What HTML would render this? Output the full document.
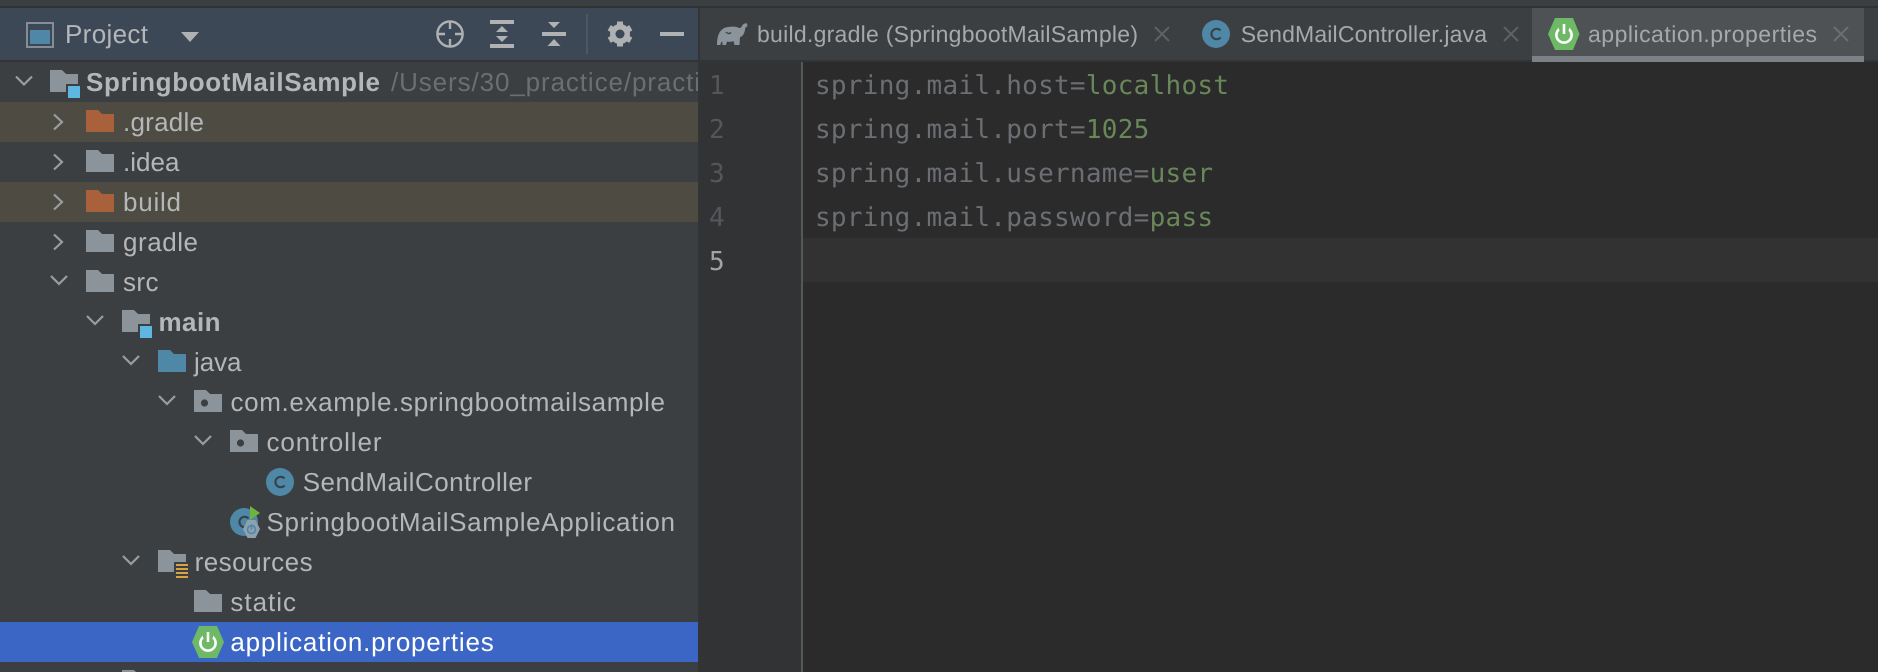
<!DOCTYPE html>
<html lang="en"><head><meta charset="utf-8"><title>application.properties</title>
<style>
html,body{margin:0;padding:0;background:#3c3f41;width:1878px;height:672px;overflow:hidden}
svg{display:block;position:absolute;left:0;top:0}
text{font-family:"Liberation Sans",sans-serif;font-size:26px;fill:#b4b6b8;text-rendering:geometricPrecision}
.b{font-weight:bold}
.m{font-family:"DejaVu Sans Mono","Liberation Mono",monospace;font-size:26px;letter-spacing:.28px;fill:#6b6e73}
.v{fill:#6a8759}
.n{font-family:"DejaVu Sans Mono","Liberation Mono",monospace;font-size:26px;fill:#54575a}
.t{fill:#a6a9ac;font-size:23px}
.ch{fill:none;stroke:#9a9da0;stroke-width:2.2}
.x{fill:none;stroke:#5d6164;stroke-width:2}
</style></head><body>
<svg width="1878" height="672" viewBox="0 0 1878 672" xmlns="http://www.w3.org/2000/svg">
<defs>
<path id="f" d="M0 0h12l4 4h12v18H0z"/>
<clipPath id="side"><rect x="0" y="62" width="698" height="40"/></clipPath>
</defs>

<!-- chrome -->
<rect width="1878" height="672" fill="#3c3f41"/>
<rect y="6" width="1878" height="2" fill="#303234"/>

<!-- project toolbar -->
<rect y="8" width="698" height="52" fill="#3d4856"/>
<rect y="60" width="1878" height="2" fill="#323436"/>
<rect x="27" y="23" width="26" height="24" fill="none" stroke="#858e96" stroke-width="2"/>
<rect x="30" y="30" width="20" height="14" fill="#4f87a6"/>
<text x="65" y="43" textLength="83">Project</text>
<path d="M181 32h18l-9 10z" fill="#afb1b3"/>
<!-- locate -->
<circle cx="450" cy="34" r="12.6" fill="none" stroke="#afb1b3" stroke-width="2.4"/>
<path d="M450 21v8M450 39v8M437 34h8M455 34h8" stroke="#afb1b3" stroke-width="2.4"/>
<!-- expand -->
<path d="M490 20h24v4h-24zM490 44h24v4h-24zM502 26l6 6h-12zM496 36h12l-6 6z" fill="#afb1b3"/>
<!-- collapse -->
<path d="M542 32h24v4h-24zM548 22h12l-6 6zM554 39l6.500 7h-13z" fill="#afb1b3"/>
<rect x="586" y="14" width="2" height="40" fill="#50585f"/>
<!-- gear -->
<g fill="#afb1b3">
<circle cx="620" cy="34" r="7.500" fill="none" stroke="#afb1b3" stroke-width="5"/>
<rect x="617" y="21.500" width="6" height="25"/>
<rect x="617" y="21.500" width="6" height="25" transform="rotate(60 620 34)"/>
<rect x="617" y="21.500" width="6" height="25" transform="rotate(120 620 34)"/>
<circle cx="620" cy="34" r="4.500" fill="#3d4856"/>
</g>
<rect x="660" y="32" width="24" height="4" fill="#afb1b3"/>

<!-- row highlights -->
<rect y="102" width="698" height="40" fill="#4d4b42"/>
<rect y="182" width="698" height="40" fill="#4d4b42"/>
<rect y="622" width="698" height="40" fill="#3b66c5"/>

<!-- root -->
<path class="ch" d="M16 76.500l8 8 8-8"/>
<use href="#f" x="50" y="70" fill="#8b939b"/>
<rect x="66" y="84" width="16" height="16" fill="#3c3f41"/>
<rect x="68" y="86" width="12" height="12" fill="#5eb6e2"/>
<text x="86" y="91" textLength="294" class="b">SpringbootMailSample</text>
<g clip-path="url(#side)"><text x="391" y="91" textLength="309" style="fill:#6c6f71">/Users/30_practice/practi</text></g>

<!-- .gradle -->
<path class="ch" d="M54 114.500l8 7.500-8 7.500"/>
<use href="#f" x="86" y="110" fill="#a8613a"/>
<text x="123" y="131" textLength="81">.gradle</text>
<!-- .idea -->
<path class="ch" d="M54 154.500l8 7.500-8 7.500"/>
<use href="#f" x="86" y="150" fill="#8b939b"/>
<text x="123" y="171" textLength="56.500">.idea</text>
<!-- build -->
<path class="ch" d="M54 194.500l8 7.500-8 7.500"/>
<use href="#f" x="86" y="190" fill="#a8613a"/>
<text x="123" y="211" textLength="58">build</text>
<!-- gradle -->
<path class="ch" d="M54 234.500l8 7.500-8 7.500"/>
<use href="#f" x="86" y="230" fill="#8b939b"/>
<text x="123" y="251" textLength="75">gradle</text>
<!-- src -->
<path class="ch" d="M51 276l8 8 8-8"/>
<use href="#f" x="86" y="270" fill="#8b939b"/>
<text x="123" y="291" textLength="35.500">src</text>
<!-- main -->
<path class="ch" d="M87 316l8 8 8-8"/>
<use href="#f" x="122" y="310" fill="#8b939b"/>
<rect x="138" y="324" width="16" height="16" fill="#3c3f41"/>
<rect x="140" y="326" width="12" height="12" fill="#5eb6e2"/>
<text x="158.500" y="331" textLength="62" class="b">main</text>
<!-- java -->
<path class="ch" d="M123 356l8 8 8-8"/>
<use href="#f" x="158" y="350" fill="#4f87a6"/>
<text x="194" y="371" textLength="47.500">java</text>
<!-- com.example -->
<path class="ch" d="M159 396l8 8 8-8"/>
<use href="#f" x="194" y="390" fill="#8b939b"/>
<circle cx="204.500" cy="403" r="3.600" fill="#3c3f41"/>
<text x="230.500" y="411" textLength="434.500">com.example.springbootmailsample</text>
<!-- controller -->
<path class="ch" d="M195 436l8 8 8-8"/>
<use href="#f" x="230" y="430" fill="#8b939b"/>
<circle cx="240.500" cy="443" r="3.600" fill="#3c3f41"/>
<text x="266.500" y="451" textLength="115">controller</text>
<!-- SendMailController -->
<circle cx="280" cy="482" r="14" fill="#4f87a6"/>
<path d="M284.500 478.500a5.200 5.200 0 1 0 0 7" fill="none" stroke="#34444e" stroke-width="2.200"/>
<text x="302.700" y="491" textLength="229.300">SendMailController</text>
<!-- Application -->
<circle cx="244" cy="522" r="14" fill="#4f87a6"/>
<path d="M248.500 518.500a5.200 5.200 0 1 0 0 7" fill="none" stroke="#34444e" stroke-width="2.200"/>
<path d="M250 506l10 7-10 7z" fill="#6db33f"/>
<path d="M247.500 520h8l4.500 9-4.500 9h-8l-4.500-9z" fill="#8da1ae"/>
<circle cx="251.500" cy="529.500" r="4" fill="none" stroke="#4f87a6" stroke-width="1.600"/>
<path d="M251.500 524.500v5" stroke="#4f87a6" stroke-width="1.600"/>
<text x="266.500" y="531" textLength="408.500">SpringbootMailSampleApplication</text>
<!-- resources -->
<path class="ch" d="M123 556l8 8 8-8"/>
<use href="#f" x="158" y="550" fill="#8b939b"/>
<rect x="174" y="562" width="16" height="18" fill="#3c3f41"/>
<path d="M176 564h12v2h-12zM176 568h12v2h-12zM176 572h12v2h-12zM176 576h12v2h-12z" fill="#d9a343"/>
<text x="194.600" y="571" textLength="118">resources</text>
<!-- static -->
<use href="#f" x="194" y="590" fill="#8b939b"/>
<text x="230.400" y="611" textLength="65.600">static</text>
<!-- application.properties -->
<path d="M199 626h18l7 16-7 16h-18l-7-16z" fill="#6db965"/>
<circle cx="208" cy="643" r="7.600" fill="none" stroke="#fff" stroke-width="2.600"/>
<path d="M203 634h10v4h-10z" fill="#6db965"/>
<path d="M208 632v10" stroke="#fff" stroke-width="2.600"/>
<text x="230.400" y="651" textLength="263.300" style="fill:#fff">application.properties</text>
<!-- partial row -->
<use href="#f" x="122" y="670" fill="#8b939b"/>

<!-- divider -->
<rect x="698" y="8" width="2" height="664" fill="#323436"/>

<!-- tabs -->
<path d="M717 45C717 35 720 28 728 27C732 26.500 736 26.500 738 27.500C740 28.500 741 28 742 26C743 24 744.500 23 747 23.500L747.500 26.500C745.500 26.500 745.300 28 745 30C744 34.500 742.500 36.500 740 37L739.500 45H734.500L733.500 41C731.500 42 729 42 727 41.500L726 45H722.500L722.300 41.500C721 42 720.800 43 720.500 45Z" fill="#8b939b"/>
<path d="M726 32c1.500 2 3.500 2 5 .5" fill="none" stroke="#3c3f41" stroke-width="1.300"/>
<text x="757" y="42" textLength="381" class="t">build.gradle (SpringbootMailSample)</text>
<path class="x" d="M1155 27l14 14M1169 27l-14 14"/>

<circle cx="1216" cy="34" r="14" fill="#4f87a6"/>
<path d="M1220.500 30.500a5.200 5.200 0 1 0 0 7" fill="none" stroke="#34444e" stroke-width="2.200"/>
<text x="1240.700" y="42" textLength="246.300" class="t">SendMailController.java</text>
<path class="x" d="M1504 27l14 14M1518 27l-14 14"/>

<rect x="1532" y="8" width="332" height="48" fill="#4e5254"/>
<rect x="1532" y="56" width="332" height="6" fill="#7b8186"/>
<path d="M1555 18h18l6.500 16-6.500 16h-18l-7-16z" fill="#6db965"/>
<circle cx="1564" cy="35" r="7.600" fill="none" stroke="#fff" stroke-width="2.600"/>
<path d="M1559 26h10v4h-10z" fill="#6db965"/>
<path d="M1564 24v10" stroke="#fff" stroke-width="2.600"/>
<text x="1588" y="42" textLength="229" class="t">application.properties</text>
<path class="x" style="stroke:#6a6e71" d="M1834 27l14 14M1848 27l-14 14"/>

<!-- gutter + editor -->
<rect x="700" y="62" width="101" height="610" fill="#313335"/>
<rect x="801" y="62" width="2" height="610" fill="#55585a"/>
<rect x="803" y="62" width="1075" height="610" fill="#2b2b2b"/>
<rect x="803" y="238" width="1075" height="44" fill="#323232"/>

<text x="709" y="94" class="n">1</text>
<text x="709" y="138" class="n">2</text>
<text x="709" y="182" class="n">3</text>
<text x="709" y="226" class="n">4</text>
<text x="709" y="270" class="n" style="fill:#a4a3a3">5</text>

<text x="815" y="94" class="m">spring.mail.host=<tspan class="v">localhost</tspan></text>
<text x="815" y="138" class="m">spring.mail.port=<tspan class="v">1025</tspan></text>
<text x="815" y="182" class="m">spring.mail.username=<tspan class="v">user</tspan></text>
<text x="815" y="226" class="m">spring.mail.password=<tspan class="v">pass</tspan></text>
</svg>
</body></html>
